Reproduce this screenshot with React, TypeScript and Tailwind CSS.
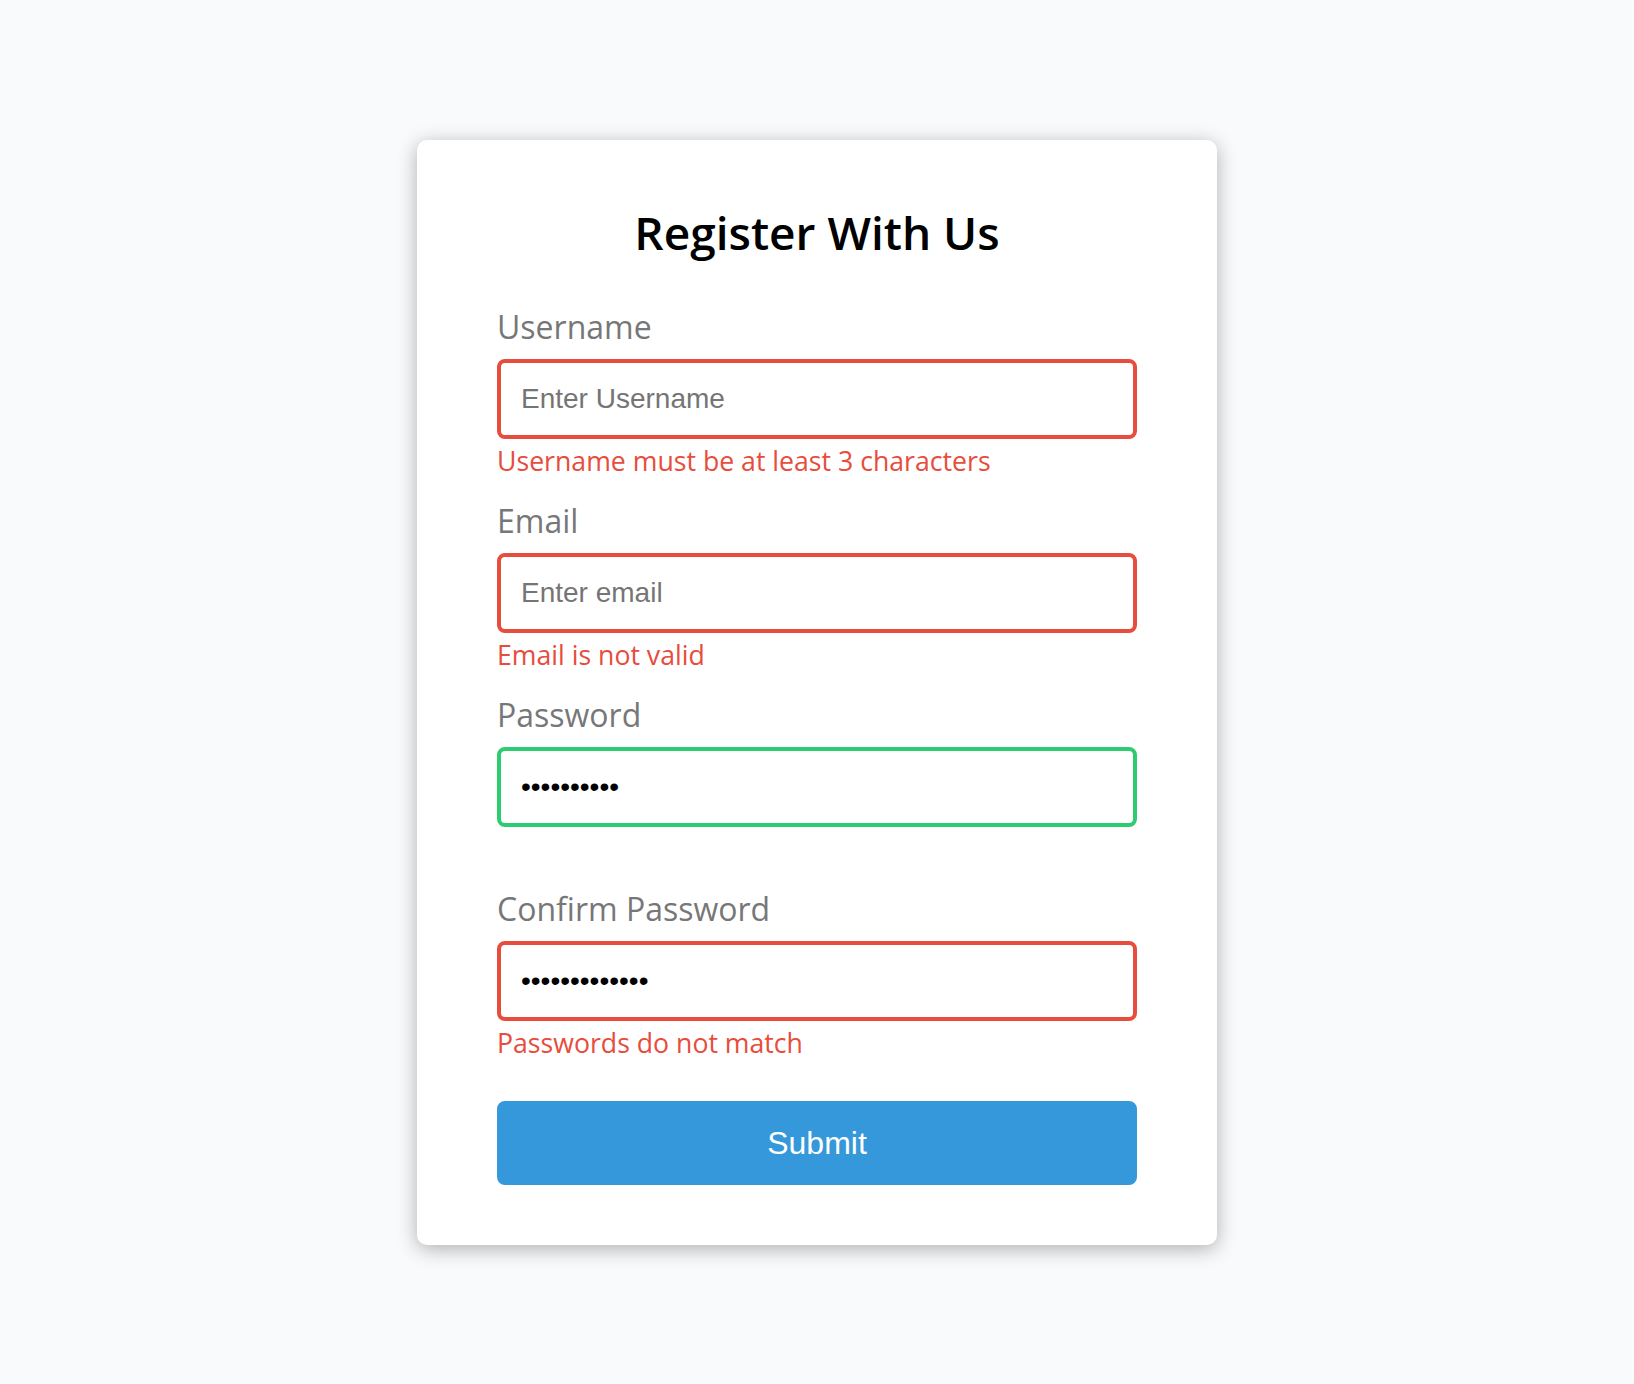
import React from 'react';

type FieldState = 'error' | 'success';

interface FieldProps {
  label: string;
  type: string;
  placeholder?: string;
  value?: string;
  state: FieldState;
  message?: string;
}

function Field({ label, type, placeholder, value, state, message }: FieldProps) {
  const border = state === 'error' ? 'border-[#e74c3c]' : 'border-[#2ecc71]';
  return (
    <div className="relative mb-[20px] pb-[40px]">
      <label className="block mb-[10px] text-[32px] leading-[44px] text-[#777]">
        {label}
      </label>
      <input
        type={type}
        placeholder={placeholder}
        defaultValue={value}
        readOnly
        className={`block w-full h-[80px] rounded-[8px] border-4 ${border} bg-white px-[20px] text-[28px] text-black placeholder:text-[#757575] outline-none font-['Liberation_Sans',Arial,sans-serif]`}
      />
      <small
        className={`absolute left-0 bottom-0 text-[26.67px] leading-[36px] text-[#e74c3c] ${
          state === 'error' ? 'visible' : 'invisible'
        }`}
      >
        {message ?? 'Error message'}
      </small>
    </div>
  );
}

export default function App() {
  return (
    <div className="min-h-screen flex items-center justify-center bg-[#f9fafb] font-['Open_Sans',sans-serif]">
      <div className="w-[800px] bg-white rounded-[10px] shadow-[0_4px_20px_rgba(0,0,0,0.3)]">
        <form className="px-[80px] py-[60px]" onSubmit={(e) => e.preventDefault()}>
          <h2 className="mb-[40px] text-center text-[46px] leading-[65px] font-semibold text-black">
            Register With Us
          </h2>
          <Field
            label="Username"
            type="text"
            placeholder="Enter Username"
            state="error"
            message="Username must be at least 3 characters"
          />
          <Field
            label="Email"
            type="text"
            placeholder="Enter email"
            state="error"
            message="Email is not valid"
          />
          <Field label="Password" type="password" value="1234567890" state="success" />
          <Field
            label="Confirm Password"
            type="password"
            value="1234567890123"
            state="error"
            message="Passwords do not match"
          />
          <button
            type="submit"
            className="block w-full mt-[40px] h-[84px] rounded-[8px] border-4 border-[#3498db] bg-[#3498db] text-[32px] text-white font-['Liberation_Sans',Arial,sans-serif]"
          >
            Submit
          </button>
        </form>
      </div>
    </div>
  );
}
